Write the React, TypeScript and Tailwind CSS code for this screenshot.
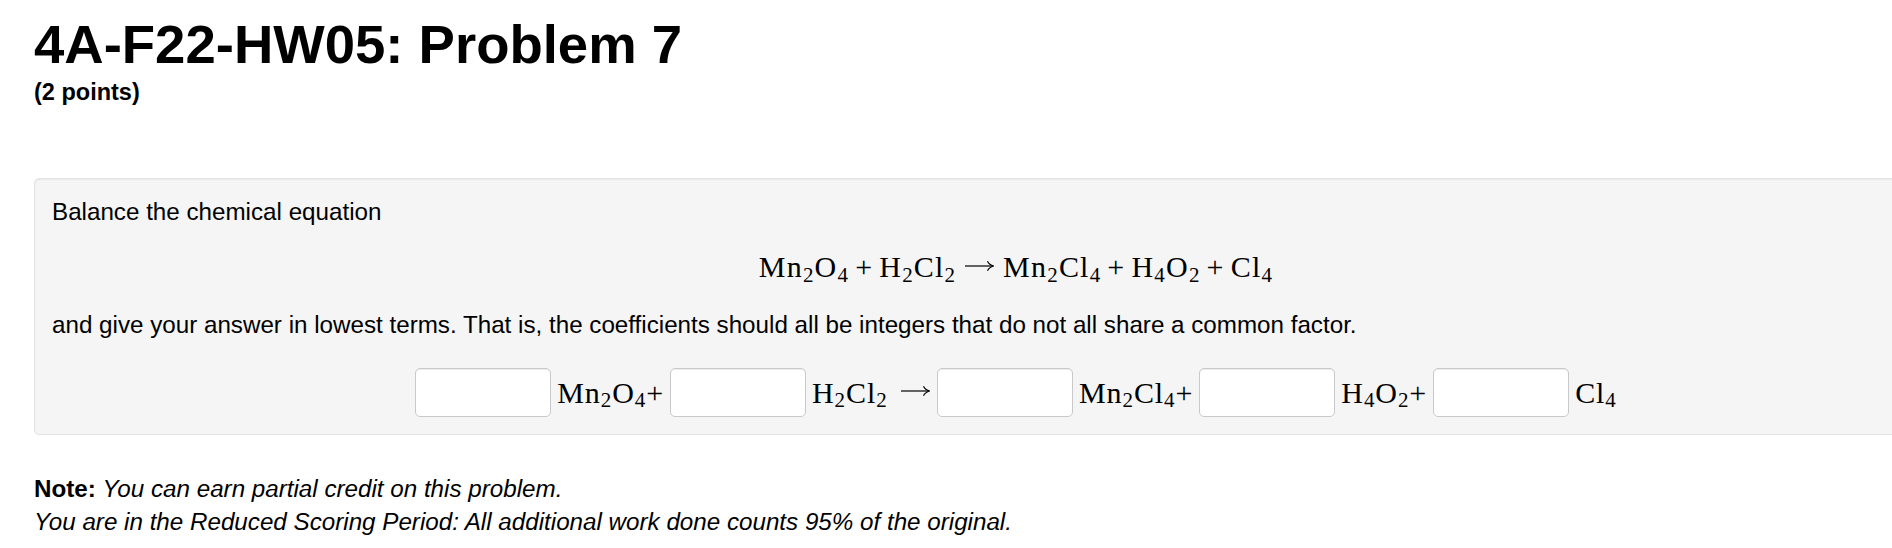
import React from 'react';

type Part = [string, string];

// a formula is a list of [element, subscript] pairs
const Formula = ({ parts }: { parts: Part[] }) => (
  <span className="whitespace-nowrap">
    {parts.map(([el, n], i) => (
      <React.Fragment key={i}>
        {el}
        <sub className="text-[0.7em] -bottom-[0.22em]">{n}</sub>
      </React.Fragment>
    ))}
  </span>
);

const Arrow = () => (
  <svg
    width="30"
    height="12"
    viewBox="0 0 30 12"
    className="inline-block align-baseline relative top-[-0.18em]"
  >
    <path d="M0 6h28" stroke="black" strokeWidth="1.2" />
    <path
      d="M22.5 1.2c0.9 2.2 2.9 4 6.3 4.8c-3.4 0.8-5.4 2.6-6.3 4.8"
      stroke="black"
      strokeWidth="1.1"
      fill="none"
    />
  </svg>
);

const Plus = () => <span className="mx-[0.2em]">+</span>;

const MN2O4: Part[] = [['Mn', '2'], ['O', '4']];
const H2CL2: Part[] = [['H', '2'], ['Cl', '2']];
const MN2CL4: Part[] = [['Mn', '2'], ['Cl', '4']];
const H4O2: Part[] = [['H', '4'], ['O', '2']];
const CL4: Part[] = [['Cl', '4']];

const AnswerBox = () => (
  <input
    type="text"
    className="w-[136px] h-[49px] shrink-0 bg-white border border-[#c9c9c9] rounded-[5px] shadow-[inset_0_1px_1px_rgba(0,0,0,0.075)] outline-none"
  />
);

export default function App() {
  return (
    <div className="w-full overflow-hidden bg-white text-black font-['Liberation_Sans',Arial,sans-serif] pl-[34px] pb-[20px]">
      <h1 className="pt-[18px] text-[54.5px] leading-[54px] font-bold">
        4A-F22-HW05: Problem 7
      </h1>
      <p className="mt-[7px] text-[23.5px] leading-[26px] font-bold">(2 points)</p>

      <div className="mt-[73px] w-[1964px] shrink-0 bg-[#f5f5f5] border border-[#e3e3e3] rounded-[5px] shadow-[inset_0_1px_2px_rgba(0,0,0,0.06)] px-[17px] pt-[17px] pb-[17px] flex flex-col">
        <p className="text-[24.2px] leading-[32px]">Balance the chemical equation</p>

        <div className="mt-[21px] flex justify-center font-['Liberation_Serif','Times_New_Roman',serif] text-[30px] leading-[36px] tracking-[0.04em]">
          <span className="whitespace-nowrap">
            <Formula parts={MN2O4} />
            <Plus />
            <Formula parts={H2CL2} />
            <span className="mx-[0.28em]">
              <Arrow />
            </span>
            <Formula parts={MN2CL4} />
            <Plus />
            <Formula parts={H4O2} />
            <Plus />
            <Formula parts={CL4} />
          </span>
        </div>

        <p className="mt-[24px] text-[24.2px] leading-[32px]">
          and give your answer in lowest terms. That is, the coefficients should all be integers that do not all share a common factor.
        </p>

        <div className="mt-[27px] flex justify-center items-center gap-[6px] font-['Liberation_Serif','Times_New_Roman',serif] text-[30px] leading-[36px] tracking-[0.03em]">
          <AnswerBox />
          <span className="whitespace-nowrap">
            <Formula parts={MN2O4} />+
          </span>
          <AnswerBox />
          <span className="whitespace-nowrap">
            <Formula parts={H2CL2} />
            <span className="ml-[0.45em]">
              <Arrow />
            </span>
          </span>
          <AnswerBox />
          <span className="whitespace-nowrap">
            <Formula parts={MN2CL4} />+
          </span>
          <AnswerBox />
          <span className="whitespace-nowrap">
            <Formula parts={H4O2} />+
          </span>
          <AnswerBox />
          <span className="whitespace-nowrap">
            <Formula parts={CL4} />
          </span>
        </div>
      </div>

      <div className="mt-[37px] text-[24.2px] leading-[33px]">
        <p>
          <span className="font-bold">Note:</span>{' '}
          <i>You can earn partial credit on this problem.</i>
        </p>
        <p>
          <i>You are in the Reduced Scoring Period: All additional work done counts 95% of the original.</i>
        </p>
      </div>
    </div>
  );
}
